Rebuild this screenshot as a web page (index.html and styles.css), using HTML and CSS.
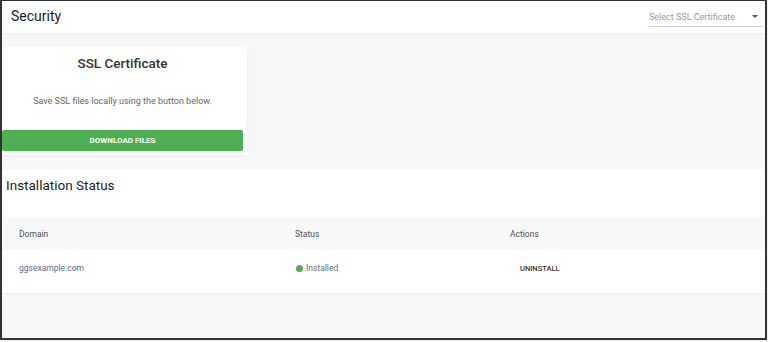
FILE: index.html
```html
<!DOCTYPE html>
<html lang="en">
<head>
    <meta charset="UTF-8">
    <meta name="viewport" content="width=device-width, initial-scale=1.0">
    <title>Security</title>
    <link rel="stylesheet" href="styles.css">
</head>
<body>
    <div class="frame">
        <div class="topbar">
            <h1 class="page-title">Security</h1>
            <div class="select">
                <span class="select-label">Select SSL Certificate</span>
                <span class="caret"></span>
            </div>
        </div>

        <div class="content">
            <div class="card">
                <h2 class="card-title">SSL Certificate</h2>
                <p class="card-text">Save SSL files locally using the button below.</p>
                <button class="btn-download">DOWNLOAD FILES</button>
            </div>

            <div class="status">
                <h2 class="status-title">Installation Status</h2>
                <table class="status-table">
                    <thead>
                        <tr>
                            <th class="col-domain">Domain</th>
                            <th class="col-status">Status</th>
                            <th>Actions</th>
                        </tr>
                    </thead>
                    <tbody>
                        <tr>
                            <td class="domain">ggsexample.com</td>
                            <td><span class="dot"></span>Installed</td>
                            <td><button class="btn-uninstall">UNINSTALL</button></td>
                        </tr>
                    </tbody>
                </table>
            </div>
        </div>
    </div>
</body>
</html>
```

FILE: styles.css
```css
body {
    margin: 0;
    font-family: Roboto, 'Liberation Sans', sans-serif;
    background-color: #f2f2f2;
}

.frame {
    width: 767px;
    height: 340px;
    box-sizing: border-box;
    border: 2px solid #333;
    border-top-width: 1px;
    background-color: #f7f7f7;
    overflow: hidden;
}

.topbar {
    height: 32px;
    background-color: #fff;
    display: flex;
    align-items: flex-start;
    justify-content: space-between;
    box-shadow: 0 1px 3px rgba(0, 0, 0, 0.05);
}

.page-title {
    margin: 0;
    padding: 5px 0 0 9px;
    font-size: 14px;
    font-weight: 400;
    line-height: 20px;
    color: #222;
}

.select {
    width: 114px;
    margin: 6px 2px 0 0;
    height: 19px;
    border-bottom: 1px solid #ccc;
    display: flex;
    align-items: center;
    justify-content: space-between;
}

.select-label {
    font-size: 9px;
    color: #9a9a9a;
}

.caret {
    width: 0;
    height: 0;
    margin-right: 5px;
    border-left: 3px solid transparent;
    border-right: 3px solid transparent;
    border-top: 3px solid #555;
}

.content {
    padding-top: 14px;
}

.card {
    width: 245px;
    box-sizing: border-box;
    padding: 6px 4px 4px 0;
    background-color: #fff;
    box-shadow: 0 1px 3px rgba(0, 0, 0, 0.06);
    text-align: center;
}

.card-title {
    margin: 0;
    font-size: 13.5px;
    font-weight: 500;
    line-height: 20px;
    color: #333;
}

.card-text {
    margin: 21px 0 0;
    font-size: 9px;
    line-height: 14px;
    color: #666;
}

.btn-download {
    display: block;
    width: 100%;
    height: 21px;
    margin-top: 22px;
    border: none;
    border-radius: 2px;
    background-color: #4caf50;
    color: #fff;
    font-family: inherit;
    font-size: 8px;
    font-weight: 700;
    cursor: pointer;
}

.status {
    margin-top: 14px;
    padding: 6px 0 8px;
    background-color: #fff;
    box-shadow: 0 1px 3px rgba(0, 0, 0, 0.05);
}

.status-title {
    margin: 0 0 22px 4px;
    font-size: 13.5px;
    font-weight: 400;
    line-height: 20px;
    color: #222;
}

.status-table {
    width: 100%;
    border-collapse: collapse;
    font-size: 8.5px;
}

.status-table th {
    height: 33px;
    padding: 0;
    text-align: left;
    font-weight: 400;
    color: #4b5066;
    background-color: #f8f8f8;
}

.status-table td {
    height: 35px;
    padding: 0;
    color: #6a6f80;
}

.col-domain {
    width: 276px;
}

.col-status {
    width: 215px;
}

.status-table th:first-child,
.status-table td:first-child {
    padding-left: 17px;
}

.domain {
    color: #5b6a8e !important;
}

.dot {
    display: inline-block;
    width: 7px;
    height: 7px;
    margin: 0 3px 0 1px;
    border-radius: 50%;
    background-color: #4caf50;
    vertical-align: -1px;
}

.btn-uninstall {
    padding: 0 10px;
    border: none;
    background: none;
    font-family: inherit;
    font-size: 7.5px;
    font-weight: 500;
    color: #333;
    cursor: pointer;
}
```
